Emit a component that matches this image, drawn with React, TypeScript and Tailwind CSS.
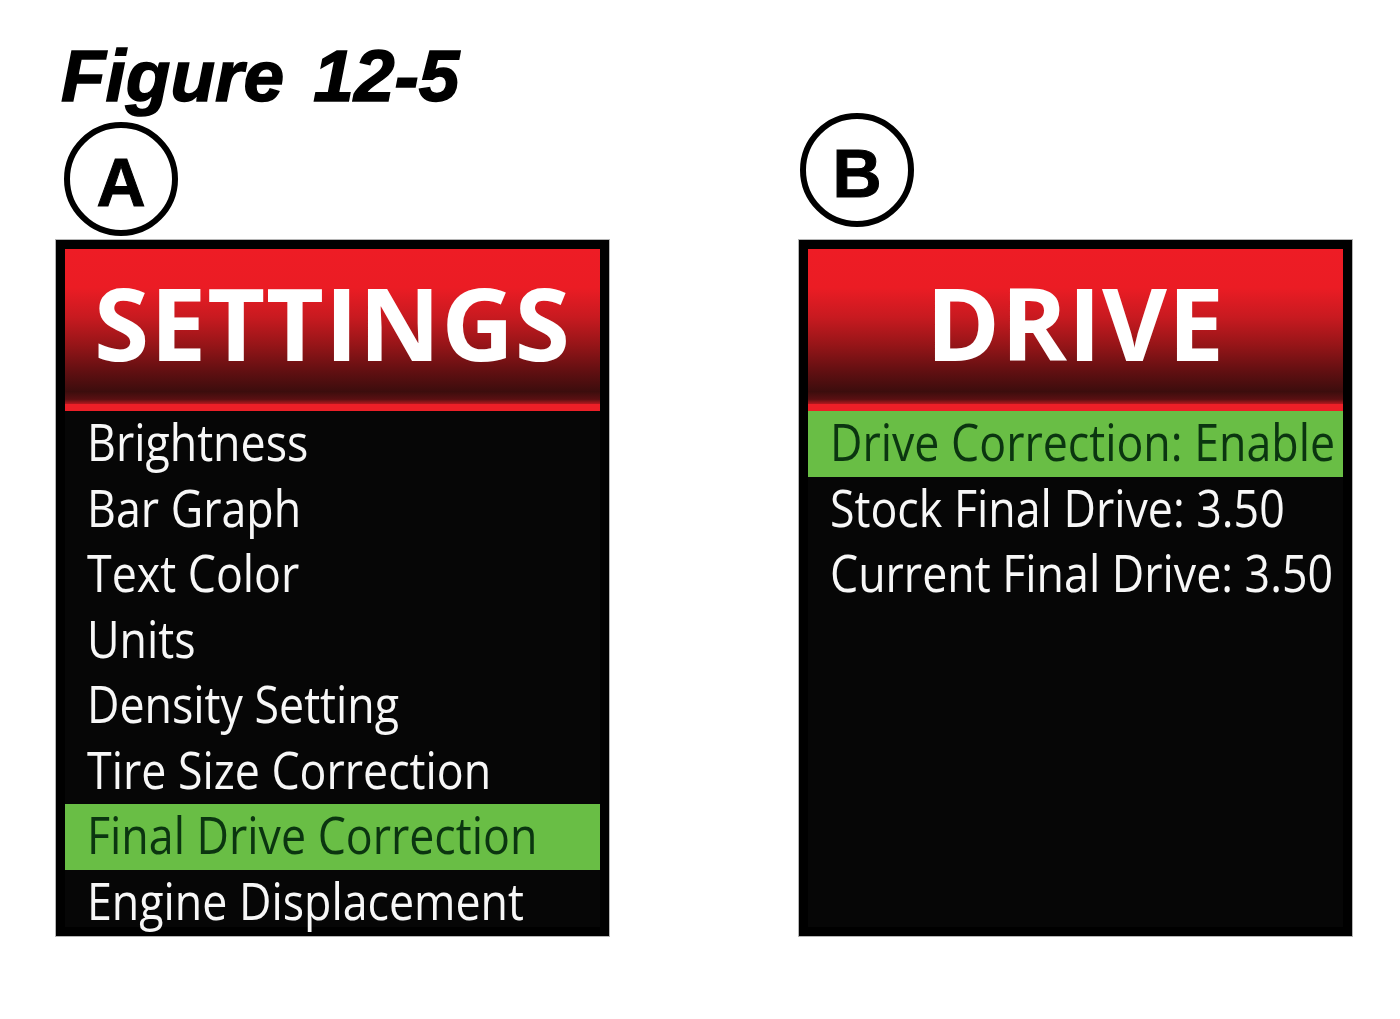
type MenuRow = {
  label: string
  selected?: boolean
}

const settingsRows: MenuRow[] = [
  { label: 'Brightness' },
  { label: 'Bar Graph' },
  { label: 'Text Color' },
  { label: 'Units' },
  { label: 'Density Setting' },
  { label: 'Tire Size Correction' },
  { label: 'Final Drive Correction', selected: true },
  { label: 'Engine Displacement' },
]

const driveRows: MenuRow[] = [
  { label: 'Drive Correction: Enable', selected: true },
  { label: 'Stock Final Drive: 3.50' },
  { label: 'Current Final Drive: 3.50' },
]

function Badge({ letter, className }: { letter: string; className: string }) {
  return (
    <div
      className={`flex h-[114px] w-[114px] items-center justify-center rounded-full border-[6px] border-black ${className}`}
    >
      <span className="pt-[6px] font-['Liberation_Sans',Arial,sans-serif] text-[68px] leading-none font-bold text-black [-webkit-text-stroke:1px_#000]">
        {letter}
      </span>
    </div>
  )
}

function Screen({ title, rows }: { title: string; rows: MenuRow[] }) {
  return (
    <div className="h-[696px] w-[553px] bg-black p-[9px] shadow-[0_0_0_1px_#b5b5b5]">
      <div className="flex h-full flex-col bg-[#060606]">
        <div className="flex h-[162px] shrink-0 flex-col">
          <div className="flex flex-1 justify-center bg-[linear-gradient(to_bottom,#ee1c25_0%,#eb1c24_25%,#c81a20_44%,#961518_62%,#5e0f11_80%,#3c0d0d_92%,#5a1012_97%,#b5181e_100%)] pt-[23px]">
            <span className="font-['Open_Sans',sans-serif] text-[100px] leading-[100px] font-bold tracking-[1px] text-white">
              {title}
            </span>
          </div>
          <div className="h-[7px] bg-[#ec1f27]" />
        </div>
        {rows.map((row) => (
          <div
            key={row.label}
            className={`h-[65.5px] shrink-0 pl-[22px] ${row.selected ? 'bg-[#69be45]' : ''}`}
          >
            <span
              className={`inline-block origin-left scale-x-[0.86] font-['Open_Sans',sans-serif] text-[52px] leading-[60px] whitespace-nowrap ${
                row.selected ? 'text-[#0b3510]' : 'text-[#f7f7f7]'
              }`}
            >
              {row.label}
            </span>
          </div>
        ))}
      </div>
    </div>
  )
}

export default function App() {
  return (
    <div className="h-[1019px] w-[1400px] overflow-hidden bg-white pt-[38px] pl-[56px]">
      <h1 className="ml-[5px] font-['Liberation_Sans',Arial,sans-serif] text-[73px] leading-[75px] font-bold text-black italic [-webkit-text-stroke:1.5px_#000] [word-spacing:9px]">
        Figure 12-5
      </h1>
      <div className="flex gap-[190px]">
        <div className="flex flex-col">
          <div className="h-[127px]">
            <Badge letter="A" className="mt-[9px] ml-[8px]" />
          </div>
          <Screen title="SETTINGS" rows={settingsRows} />
        </div>
        <div className="flex flex-col">
          <div className="h-[127px]">
            <Badge letter="B" className="mt-[0px] ml-[1px]" />
          </div>
          <Screen title="DRIVE" rows={driveRows} />
        </div>
      </div>
    </div>
  )
}
